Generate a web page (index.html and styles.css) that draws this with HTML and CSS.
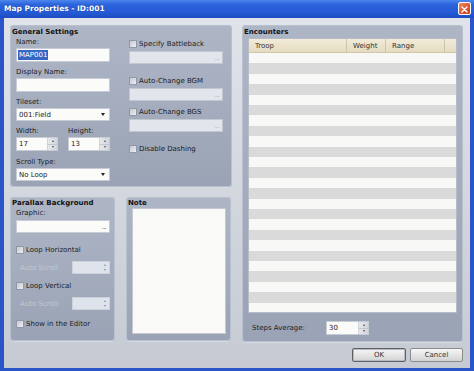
FILE: index.html
```html
<!DOCTYPE html>
<html>
<head>
<meta charset="utf-8">
<link rel="stylesheet" href="styles.css">
</head>
<body>
<div class="window">
  <div class="titlebar">
    <span class="title">Map Properties - ID:001</span>
    <span class="close"><svg width="13" height="13" viewBox="0 0 13 13"><path d="M3.5 3.5 L9.5 9.5 M9.5 3.5 L3.5 9.5" stroke="#fff" stroke-width="1.6" stroke-linecap="round"/></svg></span>
  </div>
  <div class="client">
    <div class="main">
      <div class="leftcol">
        <section class="panel general">
          <div class="ptitle">General Settings</div>
          <div class="gcols">
            <div class="gleft">
              <div class="lbl">Name:</div>
              <div class="input name"><span class="sel">MAP001</span></div>
              <div class="lbl g">Display Name:</div>
              <div class="input name"></div>
              <div class="lbl g">Tileset:</div>
              <div class="combo"><span>001:Field</span><span class="arrow"></span></div>
              <div class="pair g">
                <div class="half">
                  <div class="lbl">Width:</div>
                  <div class="spin"><span class="val">17</span><span class="btns"><i class="up"></i><i class="dn"></i></span></div>
                </div>
                <div class="half">
                  <div class="lbl">Height:</div>
                  <div class="spin"><span class="val">13</span><span class="btns"><i class="up"></i><i class="dn"></i></span></div>
                </div>
              </div>
              <div class="lbl g6">Scroll Type:</div>
              <div class="combo"><span>No Loop</span><span class="arrow"></span></div>
            </div>
            <div class="gright">
              <div class="cb r1"><span class="box"></span><span>Specify Battleback</span></div>
              <div class="browse dis"><span class="dots">...</span></div>
              <div class="cb r2"><span class="box"></span><span>Auto-Change BGM</span></div>
              <div class="browse dis"><span class="dots">...</span></div>
              <div class="cb r3"><span class="box"></span><span>Auto-Change BGS</span></div>
              <div class="browse dis"><span class="dots">...</span></div>
              <div class="cb r4"><span class="box"></span><span>Disable Dashing</span></div>
            </div>
          </div>
        </section>
        <div class="lower">
          <section class="panel parallax">
            <div class="ptitle">Parallax Background</div>
            <div class="pcontent">
              <div class="lbl">Graphic:</div>
              <div class="browse white"><span class="dots">...</span></div>
              <div class="cb p1"><span class="box"></span><span>Loop Horizontal</span></div>
              <div class="autorow"><span class="dlbl">Auto Scroll:</span><div class="spin dspin"><span class="val"></span><span class="btns"><i class="up"></i><i class="dn"></i></span></div></div>
              <div class="cb p2"><span class="box"></span><span>Loop Vertical</span></div>
              <div class="autorow"><span class="dlbl">Auto Scroll:</span><div class="spin dspin"><span class="val"></span><span class="btns"><i class="up"></i><i class="dn"></i></span></div></div>
              <div class="cb p3"><span class="box"></span><span>Show in the Editor</span></div>
            </div>
          </section>
          <section class="panel note">
            <div class="ptitle">Note</div>
            <div class="notearea"></div>
          </section>
        </div>
      </div>
      <div class="rightcol">
        <section class="panel enc">
          <div class="ptitle">Encounters</div>
          <div class="list">
            <div class="lhead">
              <span class="c1">Troop</span><span class="c2">Weight</span><span class="c3">Range</span><span class="c4"></span>
            </div>
            <div class="lbody"></div>
          </div>
          <div class="steps">
            <span class="slbl">Steps Average:</span>
            <div class="spin sspin"><span class="val">30</span><span class="btns"><i class="up"></i><i class="dn"></i></span></div>
          </div>
        </section>
        <div class="buttons">
          <button class="btn ok">OK</button>
          <button class="btn cancel">Cancel</button>
        </div>
      </div>
    </div>
  </div>
</div>
</body>
</html>
```
FILE: styles.css
```css
html, body { margin: 0; padding: 0; }
body {
  font-family: "DejaVu Sans", "Liberation Sans", sans-serif;
  font-size: 7px;
  color: #1c1c1c;
  width: 474px;
  height: 371px;
  overflow: hidden;
}
.window {
  width: 474px;
  height: 371px;
  box-sizing: border-box;
  background: #2a55c8;
  display: flex;
  flex-direction: column;
}
.titlebar {
  height: 18px;
  flex: none;
  display: flex;
  align-items: center;
  justify-content: space-between;
  padding: 0 3px 1px 4px;
  box-sizing: border-box;
  background: linear-gradient(#4d86ec, #2c64dc 25%, #245ad6 70%, #1c4cc0);
  color: #fff;
  font-weight: bold;
  font-size: 7.5px;
  text-shadow: 0 0 1px #0a2a80;
}
.close {
  width: 13px;
  height: 13px;
  box-sizing: border-box;
  border: 1px solid #fff;
  border-radius: 2px;
  background: linear-gradient(135deg, #f08a68, #dc5230 60%, #c8401e);
  display: flex;
}
.client {
  flex: 1;
  margin: 0 4px 3px 4px;
  background: linear-gradient(#e0e3ea, #c6cad2);
  padding: 7px 0 0 6px;
  box-sizing: border-box;
}
.main { display: flex; gap: 10px; }
.leftcol { width: 222px; flex: none; }
.rightcol { width: 221px; flex: none; }
.panel {
  background: linear-gradient(#aeb6c6, #9aa3b5);
  border-radius: 4px;
  box-shadow: inset 0 0 0 1px #b9c0ce, 0 1px 0 #d6dae2;
  box-sizing: border-box;
}
.ptitle {
  font-weight: bold;
  line-height: 10px;
  height: 10px;
  color: #111;
  white-space: nowrap;
}
.lbl { line-height: 10px; height: 10px; white-space: nowrap; }
.g { margin-top: 5px; }
.g6 { margin-top: 6px; }

/* General settings */
.general { height: 162px; padding: 2px 9px 0 2px; }
.gcols { display: flex; gap: 19px; margin-left: 4px; }
.gleft, .gright { width: 94px; flex: none; }
.input {
  margin-top: 1px;
  height: 14px;
  box-sizing: border-box;
  background: #fbfbf9;
  border: 1px solid #c8ccd5;
  display: flex;
  align-items: center;
  padding: 0 1px;
}
.sel { background: #3566c4; color: #fff; line-height: 10px; padding: 0 1px; }
.combo {
  margin-top: 1px;
  height: 13px;
  box-sizing: border-box;
  background: #fbfbf9;
  border: 1px solid #c8ccd5;
  display: flex;
  align-items: center;
  justify-content: space-between;
  padding: 0 4px 0 2px;
}
.arrow {
  width: 0; height: 0;
  border-left: 2.5px solid transparent;
  border-right: 2.5px solid transparent;
  border-top: 3px solid #222;
}
.pair { display: flex; gap: 10px; }
.half { width: 42px; }
.spin {
  margin-top: 1px;
  width: 42px;
  height: 14px;
  box-sizing: border-box;
  border: 1px solid #c8ccd5;
  background: #fbfbf9;
  display: flex;
}
.spin .val { flex: 1; display: flex; align-items: center; padding-left: 2px; }
.spin .btns {
  width: 9px;
  display: flex;
  flex-direction: column;
  background: linear-gradient(90deg, #e6e8ec, #d2d5dc);
  border-left: 1px solid #d0d3da;
}
.spin .btns i {
  flex: 1;
  display: flex;
  align-items: center;
  justify-content: center;
}
.spin .btns i::after {
  content: "";
  width: 0; height: 0;
  border-left: 1.5px solid transparent;
  border-right: 1.5px solid transparent;
}
.spin .btns i.up::after { border-bottom: 2px solid #555; }
.spin .btns i.dn::after { border-top: 2px solid #555; }
.spin .btns i.up { border-bottom: 1px solid #c4c7ce; }

.cb {
  display: flex;
  align-items: center;
  gap: 2px;
  height: 11px;
  white-space: nowrap;
}
.box {
  width: 8px;
  height: 8px;
  box-sizing: border-box;
  border: 1px solid #8f97a8;
  background: linear-gradient(135deg, #c4c8d0, #eeeff2);
  flex: none;
}
.r1 { margin-top: 1px; }
.r2 { margin-top: 11px; }
.r3 { margin-top: 5px; }
.r4 { margin-top: 11px; }
.browse {
  margin-top: 2px;
  height: 13px;
  box-sizing: border-box;
  display: flex;
  align-items: center;
  justify-content: flex-end;
  padding-right: 3px;
  border: 1px solid #c2c7d1;
}
.browse.dis { background: #e2e5eb; color: #a3a7b0; }
.browse.white { background: #fbfbf9; color: #333; border-color: #c8ccd5; }
.dots { font-size: 6px; line-height: 6px; letter-spacing: -0.5px; }

/* Lower panels */
.lower { margin-top: 10px; display: flex; gap: 11px; height: 144px; }
.parallax, .note { width: 105px; height: 144px; padding: 1px 5px 0 2px; }
.pcontent { margin-left: 4px; }
.browse.white { margin-top: 2px; }
.p1 { margin-top: 11px; }
.p2 { margin-top: 6px; }
.p3 { margin-top: 8px; }
.autorow {
  margin-top: 6px;
  height: 13px;
  display: flex;
  align-items: center;
  justify-content: space-between;
  padding-left: 4px;
}
.dlbl { color: #c3c8d3; }
.dspin { width: 38px; height: 13px; margin-top: 0; background: #dfe3eb; border-color: #cdd1da; }
.dspin .btns { background: #dfe3eb; border-left: none; }
.dspin .btns i.up { border-bottom: none; }
.dspin .btns i.up::after { border-bottom-color: #8a8e98; }
.dspin .btns i.dn::after { border-top-color: #8a8e98; }
.notearea {
  margin: 0 0 0 4px;
  width: 94px;
  height: 126px;
  box-sizing: border-box;
  background: #f9f9f7;
  border: 1px solid #c4c8d1;
}

/* Encounters */
.enc { height: 317px; padding: 2px 6px 0 2px; }
.list {
  margin: 1px 0 0 4px;
  width: 209px;
  height: 275px;
  box-sizing: border-box;
  border: 1px solid #b6bcc8;
  display: flex;
  flex-direction: column;
  background: #f8f8f6;
}
.lhead {
  height: 14px;
  flex: none;
  display: flex;
  background: linear-gradient(#f1ebd9, #e4dbc0);
  border-bottom: 1px solid #cfc6ac;
  box-sizing: border-box;
}
.lhead span {
  display: flex;
  align-items: center;
  padding-left: 6px;
  box-sizing: border-box;
  border-right: 1px solid #cec4a8;
  color: #333;
}
.c1 { width: 98px; }
.c2 { width: 39px; }
.c3 { width: 59px; }
.c4 { flex: 1; border-right: none !important; }
.lbody {
  flex: 1;
  background: repeating-linear-gradient(#f8f8f6 0 10.4px, #dadadb 10.4px 20.8px);
}
.steps {
  margin-top: 8px;
  display: flex;
  align-items: center;
  padding-left: 8px;
  height: 14px;
}
.slbl { width: 74px; }
.sspin { margin-top: 0; width: 43px; }

/* Buttons */
.buttons {
  margin-top: 6px;
  display: flex;
  justify-content: flex-end;
  gap: 4px;
}
.btn {
  height: 14px;
  padding: 0;
  font-family: "DejaVu Sans", "Liberation Sans", sans-serif;
  font-size: 7px;
  color: #333;
  background: linear-gradient(#f6f6f6, #e2e2e2 60%, #d2d2d4);
  border: 1px solid #8c8c8c;
  border-radius: 2px;
  box-sizing: border-box;
}
.ok { width: 54px; border-color: #606060; box-shadow: inset 0 0 0 1px #b6bac4; }
.cancel { width: 53px; }
```
